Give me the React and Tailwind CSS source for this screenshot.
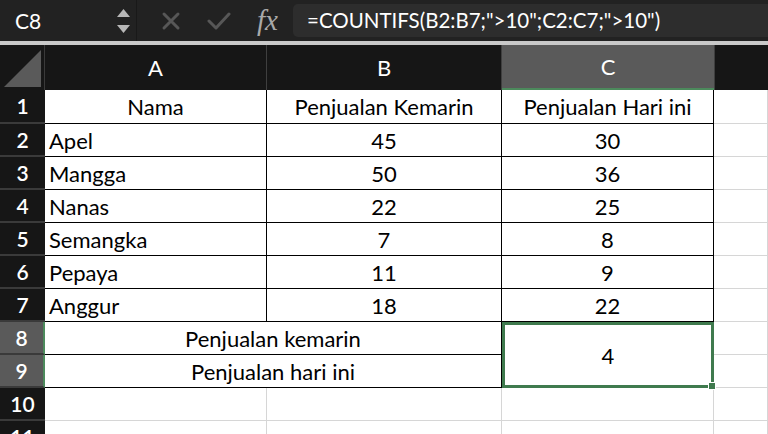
import React from 'react';

const rows = [
  ['Apel', '45', '30'],
  ['Mangga', '50', '36'],
  ['Nanas', '22', '25'],
  ['Semangka', '7', '8'],
  ['Pepaya', '11', '9'],
  ['Anggur', '18', '22'],
];

const font = { fontFamily: 'Lato, "Open Sans", sans-serif' };

function RowHead({ n, active, h = 'h-[33px]' }) {
  return (
    <div
      className={`${h} flex items-center justify-center text-[21px] font-semibold text-white border-b-2 border-[#3a3a3a] ${
        active ? 'bg-[#5a5a5a] border-r-2 border-r-[#4c8a5c]' : 'bg-[#161616]'
      }`}
    >
      {n}
    </div>
  );
}

function Cell({ children, align = 'center', h = 'h-[33px]', extra = '' }) {
  const a = align === 'left' ? 'justify-start pl-[4px]' : 'justify-center';
  return (
    <div className={`${h} flex items-center ${a} text-[22px] text-black bg-white border-r border-b border-black ${extra}`}>
      {children}
    </div>
  );
}

function Blank({ h = 'h-[33px]', extra = '' }) {
  return <div className={`${h} bg-white border-r border-b border-[#d6d6d6] ${extra}`} />;
}

export default function App() {
  return (
    <div className="w-[768px] h-[434px] overflow-hidden bg-white" style={font}>
      {/* formula bar */}
      <div className="h-[41px] bg-[#222222] flex items-center">
        <div className="w-[137px] h-full flex items-center justify-between pl-[15px] pr-[6px] border-r border-[#191919]">
          <span className="text-white text-[21px]">C8</span>
          <div className="flex flex-col gap-[8px]">
            <svg width="13" height="8" viewBox="0 0 13 8">
              <path d="M6.5 0L13 8H0z" fill="#b8b8b8" />
            </svg>
            <svg width="13" height="8" viewBox="0 0 13 8">
              <path d="M0 0h13L6.5 8z" fill="#b8b8b8" />
            </svg>
          </div>
        </div>
        <div className="flex items-center gap-[26px] pl-[24px] pr-[11px]">
          <svg width="20" height="20" viewBox="0 0 20 20">
            <path d="M3 3l14 14M17 3L3 17" stroke="#575757" strokeWidth="3" strokeLinecap="round" />
          </svg>
          <svg width="24" height="20" viewBox="0 0 24 20">
            <path d="M2 10l7 7L22 3" stroke="#575757" strokeWidth="3" fill="none" strokeLinecap="round" strokeLinejoin="round" />
          </svg>
          <span
            className="w-[25px] text-[#a9a9a9] text-[29px] italic leading-none"
            style={{ fontFamily: '"Liberation Serif", "DejaVu Serif", serif' }}
          >
            fx
          </span>
        </div>
        <div className="flex-1 h-[33px] bg-[#2d2d2d] rounded-l-[5px] flex items-center pl-[14px] text-white text-[20.5px]">
          =COUNTIFS(B2:B7;"&gt;10";C2:C7;"&gt;10")
        </div>
      </div>
      <div className="h-[4px] bg-[#c9c9c9]" />

      {/* sheet grid */}
      <div className="grid grid-cols-[45px_222px_235px_212px_1fr]">
        {/* column headers */}
        <div className="h-[45px] bg-[#161616] border-r border-[#3a3a3a] relative">
          <svg className="absolute right-[3px] bottom-[3px]" width="37" height="37" viewBox="0 0 37 37">
            <path d="M37 0V37H0z" fill="#5a5a5a" />
          </svg>
        </div>
        <div className="h-[45px] bg-[#161616] border-r border-[#3f3f3f] flex items-center justify-center text-white text-[22px]">A</div>
        <div className="h-[45px] bg-[#161616] border-r border-[#3f3f3f] flex items-center justify-center text-white text-[22px]">B</div>
        <div className="h-[45px] bg-[#5a5a5a] border-b-2 border-[#4c8a5c] flex items-center justify-center text-white text-[22px]">C</div>
        <div className="h-[45px] bg-[#161616] border-l border-[#3f3f3f]" />

        {/* row 1 */}
        <RowHead n="1" h="h-[34px]" />
        <Cell h="h-[34px]">Nama</Cell>
        <Cell h="h-[34px]">Penjualan Kemarin</Cell>
        <Cell h="h-[34px]">Penjualan Hari ini</Cell>
        <Blank h="h-[34px]" />

        {rows.map((r, i) => (
          <React.Fragment key={r[0]}>
            <RowHead n={i + 2} />
            <Cell align="left">{r[0]}</Cell>
            <Cell>{r[1]}</Cell>
            <Cell>{r[2]}</Cell>
            <Blank />
          </React.Fragment>
        ))}

        {/* rows 8-9 */}
        <RowHead n="8" active />
        <Cell extra="col-span-2">Penjualan kemarin</Cell>
        <div className="row-span-2 relative bg-white border-[3px] border-[#3f7a4e] flex items-center justify-center text-[22px] text-black">
          4
          <div className="absolute -right-[5px] -bottom-[5px] w-[8px] h-[8px] bg-[#3f7a4e] border border-white" />
        </div>
        <Blank />
        <RowHead n="9" active />
        <Cell extra="col-span-2">Penjualan hari ini</Cell>
        <Blank />

        {/* rows 10-11 */}
        {['10', '11'].map((n) => (
          <React.Fragment key={n}>
            <RowHead n={n} />
            <Blank />
            <Blank />
            <Blank />
            <Blank />
          </React.Fragment>
        ))}
      </div>
    </div>
  );
}
